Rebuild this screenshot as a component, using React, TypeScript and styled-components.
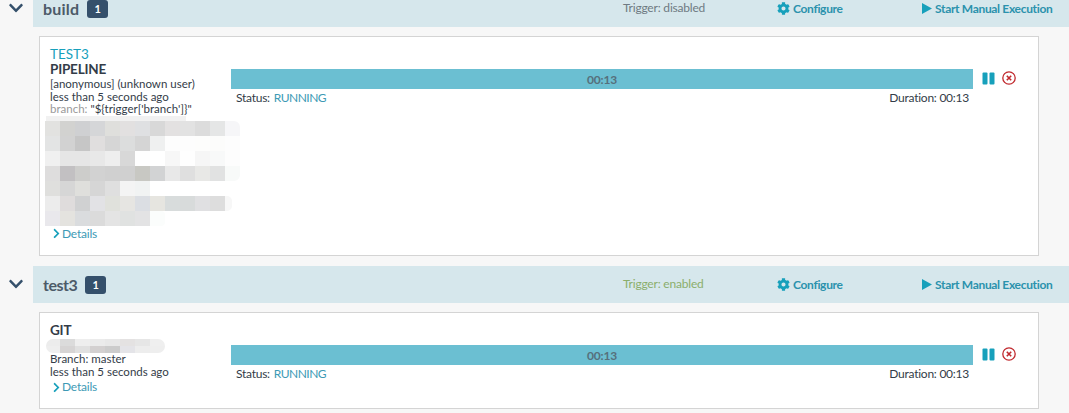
import React from "react";
import styled, { createGlobalStyle } from "styled-components";
import { FaChevronDown, FaChevronRight, FaCog } from "react-icons/fa";

const Global = createGlobalStyle`
  html, body { margin: 0; padding: 0; background: #f7f7f7; }
  body { font-family: "Lato", "Liberation Sans", sans-serif; font-size: 12px; color: #333c48; }
  #root { height: 413px; overflow: hidden; }
`;

const Page = styled.main`
  display: flex;
  flex-direction: column;
  margin-top: -10px;
`;

const Section = styled.section`
  display: flex;
  flex-direction: column;
  margin-bottom: 10px;
`;

const HeaderRow = styled.header`
  display: grid;
  grid-template-columns: 33px 1fr;
  height: 37px;
`;

const Toggle = styled.div`
  display: flex;
  align-items: center;
  justify-content: center;
  padding: 0 1px 2px 0;
  color: #35506b;
  font-size: 16px;
`;

const Band = styled.div`
  display: grid;
  grid-template-columns: 588px 156px 145px 1fr;
  align-items: center;
  background: #d6e7ec;
`;

const NameCell = styled.div`
  display: flex;
  align-items: center;
  gap: 8px;
  padding-left: 10px;
`;

const Name = styled.span<{ $spacing: number }>`
  font-size: 16px;
  font-weight: 700;
  letter-spacing: ${(p) => p.$spacing}px;
  color: #4c5a68;
`;

const Badge = styled.span`
  display: inline-flex;
  align-items: center;
  justify-content: center;
  width: 21px;
  height: 18px;
  border-radius: 3px;
  background: #35506b;
  color: #fff;
  font-size: 11px;
  font-weight: 700;
`;

const Trigger = styled.span<{ $enabled?: boolean }>`
  padding-left: 2px;
  font-size: 12px;
  letter-spacing: -0.2px;
  color: ${(p) => (p.$enabled ? "#8bae6b" : "#6f7a82")};
  transform: translateY(-1px);
`;

const HeadLink = styled.a`
  display: inline-flex;
  align-items: center;
  gap: 3px;
  font-size: 12px;
  font-weight: 700;
  letter-spacing: -0.32px;
  color: #2b92ad;
  white-space: nowrap;
  svg { flex: none; color: #17a0bb; }
`;

const Card = styled.article`
  display: flex;
  align-items: flex-start;
  width: 1000px;
  box-sizing: border-box;
  margin: 9px 0 0 39px;
  background: #fff;
  border: 1px solid #d4d4d4;
`;

const Info = styled.div<{ $h: number }>`
  display: flex;
  flex-direction: column;
  flex: none;
  width: 181px;
  height: ${(p) => p.$h}px;
  box-sizing: border-box;
  padding: 10px 0 0 10px;
  line-height: 12.5px;
`;

const StageName = styled.div`
  font-size: 13.5px;
  line-height: 15px;
  color: #17a0bb;
`;

const JobType = styled.div`
  font-size: 13.5px;
  line-height: 15px;
  font-weight: 700;
  letter-spacing: -0.2px;
  color: #333c48;
  margin-bottom: 1px;
`;

const Line = styled.div`
  white-space: nowrap;
  font-size: 11.5px;
`;

const Muted = styled.span`
  color: #9a9a9a;
`;

const Redaction = styled.svg`
  display: block;
  flex: none;
  margin-left: -5px;
`;

const Details = styled.a<{ $gap: number }>`
  display: inline-flex;
  align-items: center;
  gap: 0;
  margin: ${(p) => p.$gap}px 0 0 1px;
  font-size: 12px;
  letter-spacing: -0.2px;
  color: #3d9ab5;
  svg { color: #17a0bb; }
`;

const Progress = styled.div`
  display: flex;
  flex-direction: column;
  flex: none;
  width: 742px;
  margin: 32px 0 0 10px;
`;

const Bar = styled.div`
  height: 20px;
  display: flex;
  align-items: center;
  justify-content: center;
  background: #6bbfd2;
  color: #56707c;
  font-size: 12px;
  font-weight: 700;
  letter-spacing: -0.2px;
`;

const StatusRow = styled.div`
  display: flex;
  justify-content: space-between;
  padding: 2px 4px 0 5px;
  line-height: 14px;
  font-size: 12px;
  letter-spacing: -0.25px;
`;

const Running = styled.span`
  margin-left: 1px;
  color: #3d9ab5;
  letter-spacing: -0.5px;
`;

const Actions = styled.div`
  display: flex;
  align-items: center;
  gap: 7px;
  margin: 34px 0 0 9px;
`;

const Glyph = styled.svg`
  display: block;
`;

const cellsA = [
  ["#e2e2e0","#d2d2d0","#cfd0d2","#d5d6d8","#dfdfdc","#e2e0e0","#dfe0e2","#d8d8d8","#e3e1e1","#e2e2e2","#dcdcdc","#e5e6e6","#f6f6f8"],
  ["#e3e4e4","#d2d2d2","#c6c6c6","#e0dede","#d6d6d6","#dcdddd","#d5d5d5","#eff0f0","#fdfdfd","#fdfdfd","#fdfdfc","#fcfcfb","#fdfdfd"],
  ["#f0f0f0","#e6e6e6","#e6e6e6","#e8e8e8","#eeeeee","#d8d8d8","#fefefe","#ffffff","#f7f7f7","#fefefe","#f6f6f6","#f8f9f9","#fdfdfd"],
  ["#dedddd","#c2c0c2","#cdcdcb","#d2d2d2","#d0d0d0","#d0d0d0","#c8c8c3","#d2d3d4","#e8e8e8","#dfdfdf","#e8e8e6","#e1e2e2","#f8faf9"],
  ["#dfdfdd","#d6d6d6","#dfdfdc","#d6d6d6","#dfdfdf","#f4f4f4","#f1f3f3"],
  ["#ececec","#dfdcdc","#d0d1d2","#e2e2e5","#e0e1dc","#e6e5e2","#dbdee3","#e6e5e0","#d8dcdc","#d8dbdb","#e0e0e2","#dddddd","#f7f7f7"],
  ["#e9e8ec","#e4e3df","#dadcde","#dbdbdb","#e4e4e4","#e0e2e1","#e3e3e4","#fbfdfc"],
];

const cellsB = [
  ["#ececec","#dbdbdb","#eeeeee","#ebebeb","#e8e8e8","#e4e2e2","#e6e6e6","#efefef"],
  ["#eeeeee","#d6d4d4","#e0e0e0","#d3d0d0","#cccccc","#e4e4e8","#ededed","#eeeeee"],
];

const shapeA = [
  { x: -10, y: 5, w: 205, h: 60, r: 6 },
  { x: -10, y: 65, w: 115, h: 15, r: 0 },
  { x: -10, y: 80, w: 197, h: 15, r: 5 },
  { x: -10, y: 95, w: 130, h: 15, r: 4 },
];
const shapeB = [{ x: 1, y: 0, w: 119, h: 14, r: 7 }];

type Shape = { x: number; y: number; w: number; h: number; r: number };

function Mosaic({ id, cells, rowH, top, height, width, shape, children }: {
  id: string; cells: string[][]; rowH: number; top: number; height: number; width: number; shape: Shape[]; children?: React.ReactNode;
}) {
  return (
    <Redaction width={width} height={height} viewBox={`0 0 ${width} ${height}`} aria-hidden="true">
      <clipPath id={id}>
        {shape.map((s, i) => <rect key={i} x={s.x} y={s.y} width={s.w} height={s.h} rx={s.r} />)}
      </clipPath>
      {children}
      <g clipPath={`url(#${id})`}>
        {cells.map((row, r) =>
          row.map((c, i) => (
            <rect key={`${r}-${i}`} x={i * 15} y={top + r * rowH} width={15} height={rowH} fill={c} />
          ))
        )}
      </g>
    </Redaction>
  );
}

function PlayIcon() {
  return (
    <Glyph width="10" height="11" viewBox="0 0 10 11">
      <path d="M0 0 L10 5.5 L0 11 Z" fill="#17a0bb" />
    </Glyph>
  );
}

function PauseIcon() {
  return (
    <Glyph width="13" height="13" viewBox="0 0 13 13">
      <rect x="0.5" y="0.5" width="5" height="12" rx="1" fill="#17a0bb" />
      <rect x="7.5" y="0.5" width="5" height="12" rx="1" fill="#17a0bb" />
    </Glyph>
  );
}

function CancelIcon() {
  return (
    <Glyph width="14" height="14" viewBox="0 0 14 14" fill="none" stroke="#c0282d">
      <circle cx="7" cy="7" r="6.2" strokeWidth="1.3" />
      <path d="M4.8 4.8 L9.2 9.2 M9.2 4.8 L4.8 9.2" strokeWidth="1.6" />
    </Glyph>
  );
}

function Header({ name, spacing, enabled }: { name: string; spacing: number; enabled?: boolean }) {
  return (
    <HeaderRow>
      <Toggle><FaChevronDown /></Toggle>
      <Band>
        <NameCell>
          <Name $spacing={spacing}>{name}</Name>
          <Badge>1</Badge>
        </NameCell>
        <Trigger $enabled={enabled}>Trigger: {enabled ? "enabled" : "disabled"}</Trigger>
        <HeadLink><FaCog size={13} />Configure</HeadLink>
        <HeadLink><PlayIcon />Start Manual Execution</HeadLink>
      </Band>
    </HeaderRow>
  );
}

function Run() {
  return (
    <>
      <Progress>
        <Bar>00:13</Bar>
        <StatusRow>
          <span>Status: <Running>RUNNING</Running></span>
          <span>Duration: 00:13</span>
        </StatusRow>
      </Progress>
      <Actions>
        <PauseIcon />
        <CancelIcon />
      </Actions>
    </>
  );
}

export default function App() {
  return (
    <>
      <Global />
      <Page>
        <Section>
          <Header name="build" spacing={0.2} />
          <Card>
            <Info $h={218}>
              <StageName>TEST3</StageName>
              <JobType>PIPELINE</JobType>
              <Line>[anonymous] (unknown user)</Line>
              <Line>less than 5 seconds ago</Line>
              <Line><Muted>branch:</Muted> "${"{"}trigger['branch']{"}"}"</Line>
              <Mosaic id="maskA" cells={cellsA} rowH={15} top={5} height={111} width={195} shape={shapeA}>
                <rect x="1" y="0" width="140" height="5" fill="#f1f1f1" />
              </Mosaic>
              <Details $gap={1}><FaChevronRight size={11} />Details</Details>
            </Info>
            <Run />
          </Card>
        </Section>
        <Section>
          <Header name="test3" spacing={-0.5} enabled />
          <Card>
            <Info $h={95}>
              <JobType>GIT</JobType>
              <Mosaic id="maskB" cells={cellsB} rowH={7} top={0} height={14} width={120} shape={shapeB} />
              <Line>Branch: master</Line>
              <Line>less than 5 seconds ago</Line>
              <Details $gap={3}><FaChevronRight size={11} />Details</Details>
            </Info>
            <Run />
          </Card>
        </Section>
      </Page>
    </>
  );
}
